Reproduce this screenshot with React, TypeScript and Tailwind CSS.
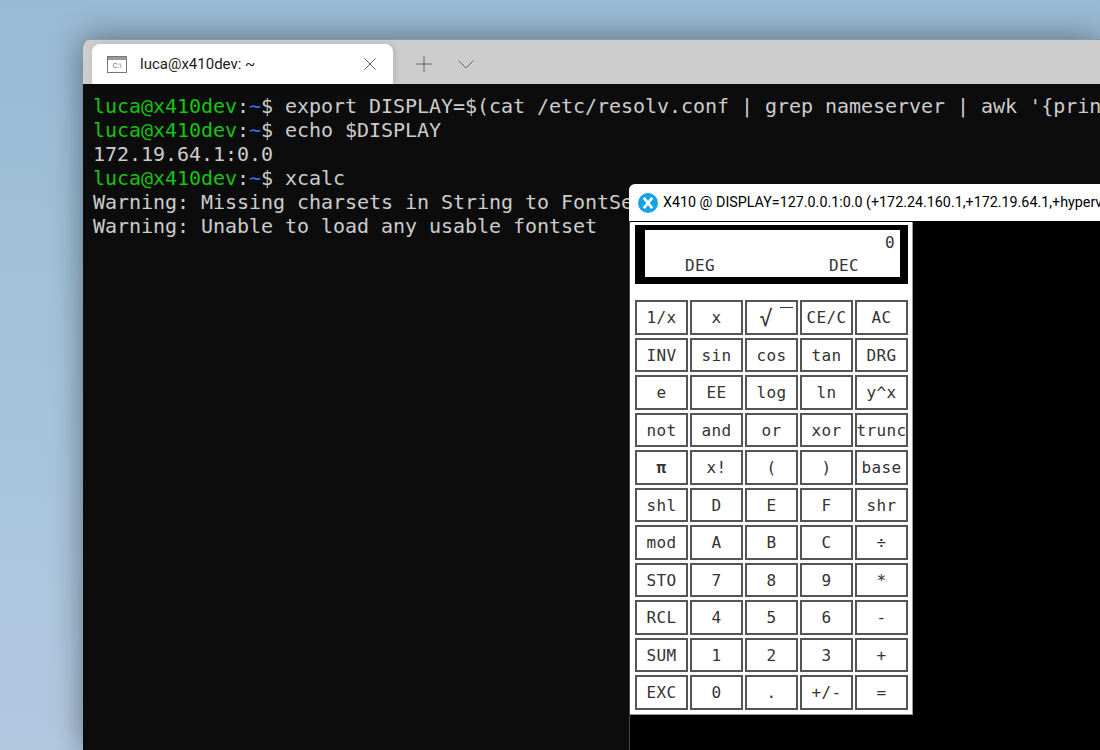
import React from "react";

const prompt = (
  <>
    <span className="text-[#16c60c]">luca@x410dev</span>
    <span>:</span>
    <span className="text-[#3b78ff]">~</span>
    <span>$ </span>
  </>
);

const keys: React.ReactNode[] = [
  "1/x", "x", <Root key="root" />, "CE/C", "AC",
  "INV", "sin", "cos", "tan", "DRG",
  "e", "EE", "log", "ln", "y^x",
  "not", "and", "or", "xor", "trunc",
  <b key="pi">π</b>, "x!", "(", ")", "base",
  "shl", "D", "E", "F", "shr",
  "mod", "A", "B", "C", "÷",
  "STO", "7", "8", "9", "*",
  "RCL", "4", "5", "6", "-",
  "SUM", "1", "2", "3", "+",
  "EXC", "0", ".", "+/-", "=",
];

function Root() {
  return (
    <span className="flex items-start gap-[7px] ml-[9px]">
      <span className="text-[22px] leading-none mt-[2px]">√</span>
      <span className="mt-[1px] h-px w-[13px] bg-[#333]" />
    </span>
  );
}

function TabIcon() {
  return (
    <div className="w-[20px] h-[17px] border border-[#777] bg-white flex flex-col shrink-0">
      <div className="h-[3px] bg-[#999]" />
      <div className="flex-1 flex items-center justify-center text-[7px] leading-none text-[#666] font-['Liberation_Sans',sans-serif]">
        C:\
      </div>
    </div>
  );
}

function X410Logo() {
  return (
    <svg width="20" height="20" viewBox="0 0 20 20" className="shrink-0">
      <circle cx="10" cy="10" r="10" fill="#14a3e8" />
      <path d="M5.8 4.8L14.2 15.2M14.2 4.8L5.8 15.2" stroke="#fff" strokeWidth="2.7" fill="none" />
    </svg>
  );
}

function Calculator() {
  return (
    <div className="w-[283px] h-[493px] mt-px bg-white border-b border-r border-[#999] pl-[5px] pt-[3px] font-['DejaVu_Sans_Mono',monospace] text-[16px] tracking-[0.4px] leading-none text-[#333]">
      <div className="w-[273px] h-[59px] bg-black pl-[10px] pr-[8px] pt-[5px]">
        <div className="h-[47px] bg-white flex flex-col">
          <div className="text-right pr-[5px] pt-[5px]">0</div>
          <div className="flex justify-between pl-[40px] pr-[41px] mt-[7px]">
            <span>DEG</span>
            <span>DEC</span>
          </div>
        </div>
      </div>
      <div className="mt-[16px] grid grid-cols-[repeat(5,53px)] auto-rows-[34.5px] gap-x-[2px] gap-y-[3px]">
        {keys.map((k, i) => (
          <div
            key={i}
            className="border-2 border-[#555] pt-[2px] flex items-center justify-center overflow-hidden whitespace-nowrap"
          >
            {k}
          </div>
        ))}
      </div>
    </div>
  );
}

export default function App() {
  return (
    <div className="relative h-[750px] w-[1100px] overflow-hidden bg-[linear-gradient(to_bottom,#99bad3,#a4c3da_45%,#b2c9e0)] pt-[39px] pl-[83px]">
      {/* Windows Terminal */}
      <div className="h-[711px] w-[1017px] flex flex-col rounded-tl-[8px] overflow-hidden shadow-[0_0_32px_rgba(0,0,0,0.45)] bg-[#0c0c0c]">
        <div className="h-[45px] shrink-0 bg-[#cdcdcd] border-t border-[#8a9aa8] flex items-end pl-[9px]">
          <div className="h-[40px] w-[301px] bg-white rounded-t-[8px] flex items-center pl-[15px] shadow-[2px_0_6px_rgba(0,0,0,0.12)]">
            <TabIcon />
            <span className="ml-[13px] text-[15px] text-[#222] font-['Roboto',sans-serif]">luca@x410dev: ~</span>
            <svg width="12" height="12" viewBox="0 0 12 12" className="ml-auto mr-[17px]">
              <path d="M.5.5l11 11M11.5.5l-11 11" stroke="#555" fill="none" />
            </svg>
          </div>
          <div className="h-[40px] flex items-center">
            <svg width="16" height="16" viewBox="0 0 16 16" className="ml-[23px]">
              <path d="M8 0v16M0 8h16" stroke="#666" fill="none" />
            </svg>
            <svg width="16" height="9" viewBox="0 0 16 9" className="ml-[26px]">
              <path d="M.5.5L8 8 15.5.5" stroke="#666" fill="none" />
            </svg>
          </div>
        </div>
        <div className="flex-1 pl-[10px] pt-[10px] font-['DejaVu_Sans_Mono',monospace] text-[20px] leading-[24px] tracking-[-0.04px] text-[#cccccc] whitespace-pre">
          <div>{prompt}export DISPLAY=$(cat /etc/resolv.conf | grep nameserver | awk '{"{"}prin</div>
          <div>{prompt}echo $DISPLAY</div>
          <div>172.19.64.1:0.0</div>
          <div>{prompt}xcalc</div>
          <div>Warning: Missing charsets in String to FontSet</div>
          <div>Warning: Unable to load any usable fontset</div>
        </div>
      </div>

      {/* X410 window */}
      <div className="absolute left-[629px] top-[184px] w-[600px] h-[600px] flex flex-col">
        <div className="h-[37px] shrink-0 bg-white rounded-tl-[6px] flex items-center pl-[9px] gap-[5px] whitespace-nowrap text-[14.3px] text-black font-['Roboto',sans-serif]">
          <X410Logo />
          <span>X410 @ DISPLAY=127.0.0.1:0.0 (+172.24.160.1,+172.19.64.1,+hyperv</span>
        </div>
        <div className="flex-1 bg-black border-l border-[#444]">
          <Calculator />
        </div>
      </div>
    </div>
  );
}
